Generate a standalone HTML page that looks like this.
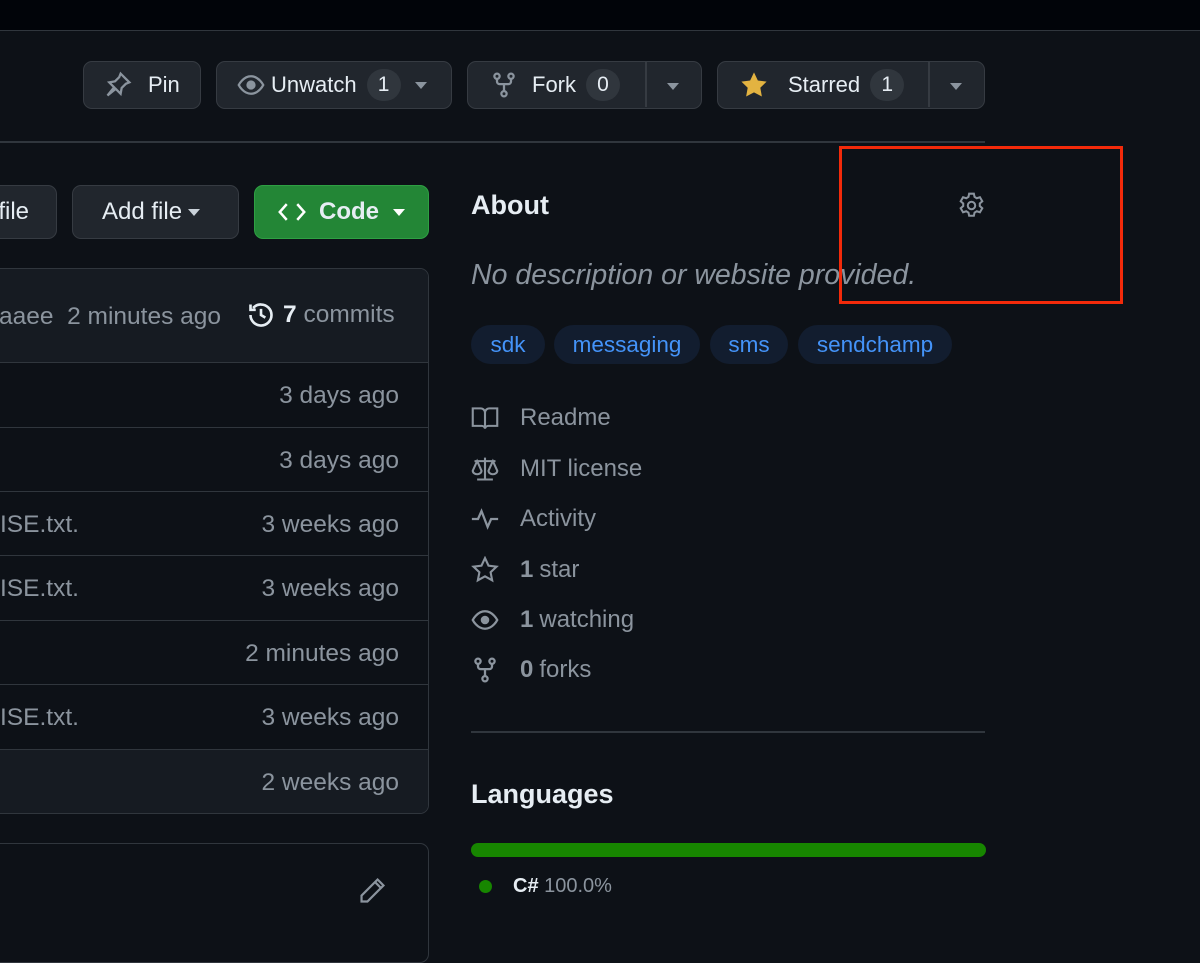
<!DOCTYPE html>
<html><head><meta charset="utf-8"><style>
*{box-sizing:border-box;margin:0;padding:0}
body{width:1200px;height:937px;overflow:hidden;background:#0d1117;font-family:"Liberation Sans",sans-serif;color:#e6edf3;position:relative}
.abs{position:absolute}
.btn{position:absolute;background:#21262d;border:1.5px solid #363b42;border-radius:9px;display:flex;align-items:center;color:#e6edf3;font-size:22px;font-weight:bold}
.cnt{background:#30363d;border-radius:20px;height:32px;min-width:34px;display:flex;align-items:center;justify-content:center;font-weight:normal;font-size:21px}
.caret{width:0;height:0;border-left:6px solid transparent;border-right:6px solid transparent;border-top:7px solid #8b949e}
.row{position:absolute;left:-2px;width:431px;height:64.5px;border-top:1.5px solid #30363d;color:#8b949e;font-size:24.5px}
.row span{position:absolute;top:19px}
.row .t{right:30px}
.pill{position:absolute;top:325px;height:39px;border-radius:20px;background:#121d2f;color:#4493f8;font-size:22.5px;display:flex;align-items:center;justify-content:center}
.li{position:absolute;left:471px;height:30px;display:flex;align-items:center;color:#8b949e;font-size:24px}
.li svg{width:28px;height:28px;margin-right:21px}
.li b{color:#8b949e;margin-right:6px}
</style></head><body>
<div class="abs" style="left:0;top:0;width:1200px;height:31px;background:#010409;border-bottom:1.5px solid #30363d"></div>

<div class="btn" style="left:83px;top:61px;width:118px;height:48px;padding-left:20px">
<svg width="28" height="28" viewBox="0 0 16 16" fill="none" stroke="#8b949e" stroke-width="1.3"><path d="M9.5 1.5l5 5-2 .8-2.4 2.4-.6 3.3-2.8-2.8L2 14l3.8-4.7L3 6.5l3.3-.6 2.4-2.4z"/></svg>
<span style="margin-left:16px;font-weight:normal">Pin</span></div>

<div class="btn" style="left:216px;top:61px;width:236px;height:48px;padding-left:20px">
<svg width="28" height="28" viewBox="0 0 16 16" fill="none" stroke="#8b949e" stroke-width="1.3"><path d="M1 8s2.5-5 7-5 7 5 7 5-2.5 5-7 5-7-5-7-5z"/><circle cx="8" cy="8" r="2" fill="#8b949e"/></svg>
<span style="margin-left:6px;font-weight:normal">Unwatch</span><div class="cnt" style="margin-left:10px">1</div><div class="caret" style="margin-left:14px"></div></div>

<div class="btn" style="left:467px;top:61px;width:235px;height:48px;padding-left:22px">
<svg width="28" height="28" viewBox="0 0 16 16" fill="none" stroke="#8b949e" stroke-width="1.3"><circle cx="4" cy="3" r="1.5"/><circle cx="12" cy="3" r="1.5"/><circle cx="8" cy="13" r="1.5"/><path d="M4 4.5v1.5a1.5 1.5 0 001.5 1.5h5A1.5 1.5 0 0012 6V4.5M8 7.5v4"/></svg>
<span style="margin-left:14px;font-weight:normal">Fork</span><div class="cnt" style="margin-left:10px">0</div>
<div class="abs" style="left:177px;top:0;width:1.5px;height:45px;background:#363b42"></div><div class="caret abs" style="left:199px;top:21px"></div></div>

<div class="btn" style="left:717px;top:61px;width:268px;height:48px;padding-left:22px">
<svg width="28" height="28" viewBox="0 0 16 16"><path d="M8 .8l2.2 4.6 5 .7-3.6 3.5.9 5L8 12.2 3.5 14.6l.9-5L.8 6.1l5-.7z" fill="#e3b341"/></svg>
<span style="margin-left:20px;font-weight:normal">Starred</span><div class="cnt" style="margin-left:10px">1</div>
<div class="abs" style="left:210px;top:0;width:1.5px;height:45px;background:#363b42"></div><div class="caret abs" style="left:232px;top:21px"></div></div>

<div class="abs" style="left:0;top:141px;width:985px;height:1.5px;background:#30363d"></div>

<div class="btn" style="left:-20px;top:185px;width:77px;height:54px;justify-content:flex-end;padding-right:27px;font-size:24px;font-weight:normal">file</div>
<div class="btn" style="left:72px;top:185px;width:167px;height:54px;padding-left:29px;font-size:24px;font-weight:normal">Add file<div class="caret" style="margin-left:6px;border-top-color:#c9d1d9"></div></div>
<div class="btn" style="left:254px;top:185px;width:175px;height:54px;padding-left:22px;background:#238636;border-color:#2ea043;font-size:24px">
<svg width="30" height="28" viewBox="0 0 16 16" fill="none" stroke="#fff" stroke-width="1.4"><path d="M5 3.5L1 8l4 4.5M11 3.5L15 8l-4 4.5"/></svg>
<span style="margin-left:12px">Code</span><div class="caret" style="margin-left:14px;border-top-color:#fff"></div></div>

<div class="abs" style="left:-10px;top:268px;width:439px;height:546px;border:1.5px solid #30363d;border-radius:9px;overflow:hidden">
<div class="abs" style="left:0;top:0;width:100%;height:94px;background:#161b22"></div>
<div class="abs" style="left:0;top:480px;width:100%;height:70px;background:#161b22"></div>
<span class="abs" style="left:8px;top:34px;color:#8b949e;font-size:24.5px">aaee&nbsp;&nbsp;2 minutes ago</span>
<span class="abs" style="left:256px;top:32px;font-size:24.5px;display:flex;align-items:center;color:#8b949e">
<svg width="28" height="28" viewBox="0 0 16 16" fill="none" stroke="#e6edf3" stroke-width="1.5"><path d="M2 8a6 6 0 106-6 6 6 0 00-4.5 2M2 2v3h3M8 4.5V8l2.5 1.5"/></svg>
<b style="color:#e6edf3;margin-left:8px">7</b>&nbsp;commits</span>
</div>
<div class="row" style="top:362px"><span class="t">3 days ago</span></div>
<div class="row" style="top:427px"><span class="t">3 days ago</span></div>
<div class="row" style="top:491px"><span style="left:2px">ISE.txt.</span><span class="t">3 weeks ago</span></div>
<div class="row" style="top:555px"><span style="left:2px">ISE.txt.</span><span class="t">3 weeks ago</span></div>
<div class="row" style="top:620px"><span class="t">2 minutes ago</span></div>
<div class="row" style="top:684px"><span style="left:2px">ISE.txt.</span><span class="t">3 weeks ago</span></div>
<div class="row" style="top:749px;height:63px"><span class="t">2 weeks ago</span></div>

<div class="abs" style="left:-10px;top:843px;width:439px;height:120px;border:1.5px solid #30363d;border-radius:9px"></div>
<svg class="abs" style="left:359px;top:877px" width="27" height="27" viewBox="0 0 16 16" fill="none" stroke="#8b949e" stroke-width="1.3"><path d="M11 1.5l3.5 3.5L5 14.5H1.5V11zM9.5 3l3.5 3.5"/></svg>

<div class="abs" style="left:471px;top:190px;font-size:27px;font-weight:bold">About</div>
<svg class="abs" style="left:958px;top:192px" width="27" height="27" viewBox="0 0 16 16" fill="none" stroke="#8b949e" stroke-width="1.2"><path d="M6.6 1h2.8l.4 1.9 1.3.8 1.9-.6 1.4 2.4-1.5 1.3v1.5l1.5 1.3-1.4 2.4-1.9-.6-1.3.8-.4 1.9H6.6l-.4-1.9-1.3-.8-1.9.6L1.6 9.6l1.5-1.3V6.8L1.6 5.5 3 3.1l1.9.6 1.3-.8z"/><circle cx="8" cy="8" r="2.2"/></svg>
<div class="abs" style="left:471px;top:259px;font-size:28.5px;font-style:italic;color:#8b949e">No description or website provided.</div>
<div class="abs" style="left:839px;top:146px;width:284px;height:158px;border:3px solid #f22a0a"></div>

<div class="pill" style="left:471px;width:74px">sdk</div>
<div class="pill" style="left:554px;width:146px">messaging</div>
<div class="pill" style="left:710px;width:78px">sms</div>
<div class="pill" style="left:798px;width:154px">sendchamp</div>

<div class="li" style="top:403px"><svg viewBox="0 0 16 16" fill="none" stroke="#8b949e" stroke-width="1.2"><path d="M1 2.5h4.5A2.5 2.5 0 018 5v9a2 2 0 00-2-1.5H1zM15 2.5h-4.5A2.5 2.5 0 008 5v9a2 2 0 012-1.5h5z"/></svg>Readme</div>
<div class="li" style="top:454px"><svg viewBox="0 0 16 16" fill="none" stroke="#8b949e" stroke-width="1.2"><path d="M8 1.5v12M3.5 14h9M2 3.5h12M3.5 3.5L1 9a2.5 2 0 005 0zM12.5 3.5L10 9a2.5 2 0 005 0z"/></svg>MIT license</div>
<div class="li" style="top:504px"><svg viewBox="0 0 16 16" fill="none" stroke="#8b949e" stroke-width="1.3"><path d="M.5 8h3.5l2-4.5 3.5 9L11.5 8h4"/></svg>Activity</div>
<div class="li" style="top:555px"><svg viewBox="0 0 16 16" fill="none" stroke="#8b949e" stroke-width="1.2"><path d="M8 1.2l2 4.3 4.6.6-3.4 3.2.9 4.6L8 11.6l-4.1 2.3.9-4.6L1.4 6.1 6 5.5z"/></svg><b>1</b>star</div>
<div class="li" style="top:605px"><svg viewBox="0 0 16 16" fill="none" stroke="#8b949e" stroke-width="1.3"><path d="M1 8s2.5-5 7-5 7 5 7 5-2.5 5-7 5-7-5-7-5z"/><circle cx="8" cy="8" r="1.8" fill="#8b949e"/></svg><b>1</b>watching</div>
<div class="li" style="top:655px"><svg viewBox="0 0 16 16" fill="none" stroke="#8b949e" stroke-width="1.3"><circle cx="4" cy="3" r="1.5"/><circle cx="12" cy="3" r="1.5"/><circle cx="8" cy="13" r="1.5"/><path d="M4 4.5v1.5a1.5 1.5 0 001.5 1.5h5A1.5 1.5 0 0012 6V4.5M8 7.5v4"/></svg><b>0</b>forks</div>

<div class="abs" style="left:471px;top:731px;width:514px;height:1.5px;background:#30363d"></div>
<div class="abs" style="left:471px;top:779px;font-size:27px;font-weight:bold">Languages</div>
<div class="abs" style="left:471px;top:843px;width:515px;height:14px;border-radius:7px;background:#178600"></div>
<div class="abs" style="left:479px;top:880px;width:13px;height:13px;border-radius:50%;background:#178600"></div>
<div class="abs" style="left:513px;top:875px;font-size:20px;color:#8b949e"><b style="color:#e6edf3">C#</b> 100.0%</div>
</body></html>
